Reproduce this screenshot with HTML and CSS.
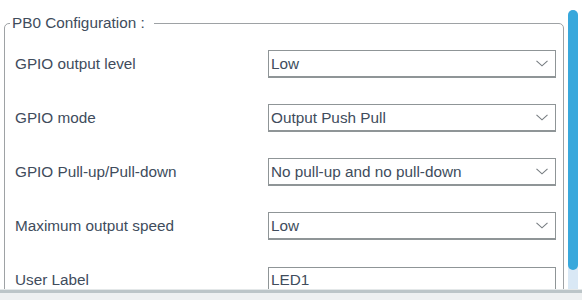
FILE: index.html
```html
<!DOCTYPE html>
<html>
<head>
<meta charset="utf-8">
<link rel="stylesheet" href="styles.css">
</head>
<body>
<div class="panel">
  <div class="content">
    <fieldset class="config">
      <legend class="config-title">PB0 Configuration :</legend>
      <div class="rows">
        <div class="row">
          <span class="label">GPIO output level</span>
          <div class="select"><span class="value">Low</span><svg class="chev" width="12" height="7" viewBox="0 0 12 7"><path d="M0.5 0.8 L6 5.8 L11.5 0.8" fill="none" stroke="#767c80" stroke-width="1.1"/></svg></div>
        </div>
        <div class="row">
          <span class="label">GPIO mode</span>
          <div class="select"><span class="value">Output Push Pull</span><svg class="chev" width="12" height="7" viewBox="0 0 12 7"><path d="M0.5 0.8 L6 5.8 L11.5 0.8" fill="none" stroke="#767c80" stroke-width="1.1"/></svg></div>
        </div>
        <div class="row">
          <span class="label">GPIO Pull-up/Pull-down</span>
          <div class="select"><span class="value">No pull-up and no pull-down</span><svg class="chev" width="12" height="7" viewBox="0 0 12 7"><path d="M0.5 0.8 L6 5.8 L11.5 0.8" fill="none" stroke="#767c80" stroke-width="1.1"/></svg></div>
        </div>
        <div class="row">
          <span class="label">Maximum output speed</span>
          <div class="select"><span class="value">Low</span><svg class="chev" width="12" height="7" viewBox="0 0 12 7"><path d="M0.5 0.8 L6 5.8 L11.5 0.8" fill="none" stroke="#767c80" stroke-width="1.1"/></svg></div>
        </div>
        <div class="row">
          <span class="label">User Label</span>
          <input class="text-input" type="text" value="LED1">
        </div>
      </div>
    </fieldset>
  </div>
  <div class="scrollbar">
    <div class="track"><div class="thumb"></div></div>
  </div>
</div>
<div class="edge"></div>
<div class="sep"></div>
</body>
</html>
```

FILE: styles.css
```css
html, body {
  margin: 0;
  padding: 0;
}
body {
  width: 582px;
  height: 300px;
  overflow: hidden;
  background: #eef0f1;
  font-family: "Liberation Sans", Arial, sans-serif;
  font-size: 15.3px;
  color: #404c5c;
}
.panel {
  height: 289px;
  background: #ffffff;
  display: flex;
  overflow: hidden;
}
.content {
  width: 568px;
  padding-top: 14px;
  box-sizing: border-box;
}
.config {
  margin: 0 0 0 4px;
  width: 560px;
  box-sizing: border-box;
  border: 1px solid #9ea2a5;
  border-radius: 5px;
  padding: 0 7px 20px 10px;
  min-width: 0;
}
.config-title {
  margin-left: -5px;
  padding: 0 9px 0 2px;
  font-size: 15.3px;
  color: #404c5c;
}
.rows {
  display: flex;
  flex-direction: column;
  gap: 26px;
  padding-top: 18px;
}
.row {
  display: grid;
  grid-template-columns: 253px 288px;
  align-items: center;
  height: 28px;
}
.label {
  white-space: nowrap;
}
.select {
  height: 28px;
  box-sizing: border-box;
  border: 1px solid #8f9597;
  border-bottom: 2px solid #8f9597;
  display: flex;
  align-items: center;
  justify-content: space-between;
  padding: 0 7px 0 2px;
  background: #ffffff;
}
.value {
  white-space: nowrap;
}
.chev {
  display: block;
}
.text-input {
  height: 27px;
  box-sizing: border-box;
  border: 1px solid #8f9597;
  padding: 0 2px;
  margin: 0;
  font-family: "Liberation Sans", Arial, sans-serif;
  font-size: 15.3px;
  color: #404c5c;
  width: 288px;
  outline: none;
}
.scrollbar {
  width: 14px;
  padding-top: 10px;
  box-sizing: border-box;
}
.track {
  width: 10px;
  height: 279px;
  background: #d9e8f5;
  border-radius: 5px 5px 0 0;
}
.thumb {
  height: 260px;
  background: #38a8dc;
  border-radius: 5px;
}
.edge {
  height: 1px;
  background: #e4e8e9;
}
.sep {
  height: 3px;
  background: #bcc5c8;
}
```
